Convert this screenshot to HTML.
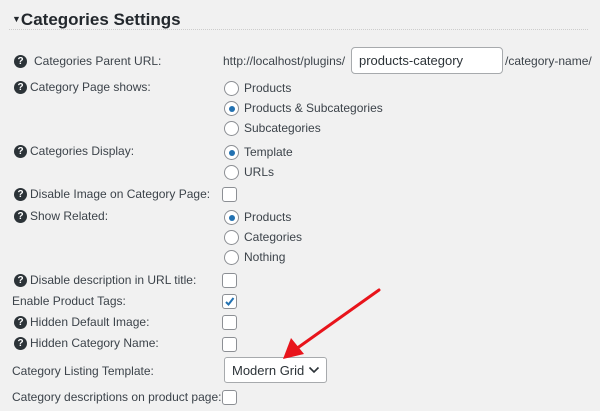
<html><head><style>
body{margin:0;width:600px;height:411px;background:#f1f1f1;font-family:"Liberation Sans",sans-serif;font-size:12px;color:#3c434a;position:relative;overflow:hidden}
.a{position:absolute;white-space:nowrap;line-height:14px}
.h{position:absolute;width:13px;height:13px;border-radius:50%;background:#2c3338;color:#fff;font-size:10px;font-weight:bold;text-align:center;line-height:13px}
.r{position:absolute;width:15px;height:15px;border:1px solid #8c8f94;border-radius:50%;background:#fff;box-sizing:border-box}
.r.on::after{content:"";position:absolute;left:3.5px;top:3.5px;width:6px;height:6px;border-radius:50%;background:#2271b1}
.c{position:absolute;width:15px;height:15px;border:1px solid #8c8f94;border-radius:3px;background:#fff;box-sizing:border-box}
</style></head><body>
<div class="a" style="left:12px;top:9px;font-size:17px;font-weight:bold;line-height:20px;color:#23282d"><span style="font-size:9px;vertical-align:3px">▼</span>Categories Settings</div>
<div style="position:absolute;left:9px;right:12px;top:29px;border-top:1px dotted #ccc"></div>

<div class="h" style="left:14px;top:55px">?</div><div class="a" style="left:34px;top:54px">Categories Parent URL:</div>
<div class="a" style="left:223px;top:54px">http://localhost/plugins/</div>
<div style="position:absolute;left:351px;top:47px;width:152px;height:27px;border:1px solid #a7aaad;border-radius:4px;background:#fff;box-sizing:border-box"></div>
<div class="a" style="left:359px;top:54px;font-size:13px;color:#2c3338">products-category</div>
<div class="a" style="left:505px;top:54px">/category-name/</div>

<div class="h" style="left:14px;top:81px">?</div><div class="a" style="left:30px;top:80px">Category Page shows:</div>
<div class="r" style="left:224px;top:81px"></div><div class="a" style="left:244px;top:81px">Products</div>
<div class="r on" style="left:224px;top:101px"></div><div class="a" style="left:244px;top:101px">Products &amp; Subcategories</div>
<div class="r" style="left:224px;top:121px"></div><div class="a" style="left:244px;top:121px">Subcategories</div>

<div class="h" style="left:14px;top:145px">?</div><div class="a" style="left:30px;top:144px">Categories Display:</div>
<div class="r on" style="left:224px;top:145px"></div><div class="a" style="left:244px;top:145px">Template</div>
<div class="r" style="left:224px;top:165px"></div><div class="a" style="left:244px;top:165px">URLs</div>

<div class="h" style="left:14px;top:188px">?</div><div class="a" style="left:30px;top:187px">Disable Image on Category Page:</div>
<div class="c" style="left:222px;top:187px"></div>

<div class="h" style="left:14px;top:210px">?</div><div class="a" style="left:30px;top:209px">Show Related:</div>
<div class="r on" style="left:224px;top:210px"></div><div class="a" style="left:244px;top:210px">Products</div>
<div class="r" style="left:224px;top:230px"></div><div class="a" style="left:244px;top:230px">Categories</div>
<div class="r" style="left:224px;top:250px"></div><div class="a" style="left:244px;top:250px">Nothing</div>

<div class="h" style="left:14px;top:274px">?</div><div class="a" style="left:30px;top:273px">Disable description in URL title:</div>
<div class="c" style="left:222px;top:273px"></div>

<div class="a" style="left:12px;top:294px">Enable Product Tags:</div>
<div class="c" style="left:222px;top:294px"></div>
<svg style="position:absolute;left:223px;top:295px" width="13" height="13"><path d="M3 7 L5.5 9.5 L10.5 3" stroke="#2271b1" stroke-width="2" fill="none"/></svg>

<div class="h" style="left:14px;top:316px">?</div><div class="a" style="left:30px;top:315px">Hidden Default Image:</div>
<div class="c" style="left:222px;top:315px"></div>

<div class="h" style="left:14px;top:337px">?</div><div class="a" style="left:30px;top:336px">Hidden Category Name:</div>
<div class="c" style="left:222px;top:337px"></div>

<div class="a" style="left:12px;top:364px">Category Listing Template:</div>
<div style="position:absolute;left:224px;top:357px;width:103px;height:26px;border:1px solid #a7aaad;border-radius:3px;background:#fff;box-sizing:border-box"></div>
<div class="a" style="left:232px;top:364px;font-size:13px;color:#2c3338">Modern Grid</div>
<svg style="position:absolute;left:308px;top:366px" width="12" height="8"><path d="M1.5 1.5 L6 6 L10.5 1.5" stroke="#2c3338" stroke-width="1.6" fill="none"/></svg>

<div class="a" style="left:12px;top:390px">Category descriptions on product page:</div>
<div class="c" style="left:222px;top:390px"></div>

<svg style="position:absolute;left:0;top:0" width="600" height="411">
<line x1="379" y1="290" x2="296" y2="349" stroke="#e8141b" stroke-width="3" stroke-linecap="round"/>
<polygon points="283,359 291,338 304,354" fill="#e8141b"/>
</svg>
</body></html>
